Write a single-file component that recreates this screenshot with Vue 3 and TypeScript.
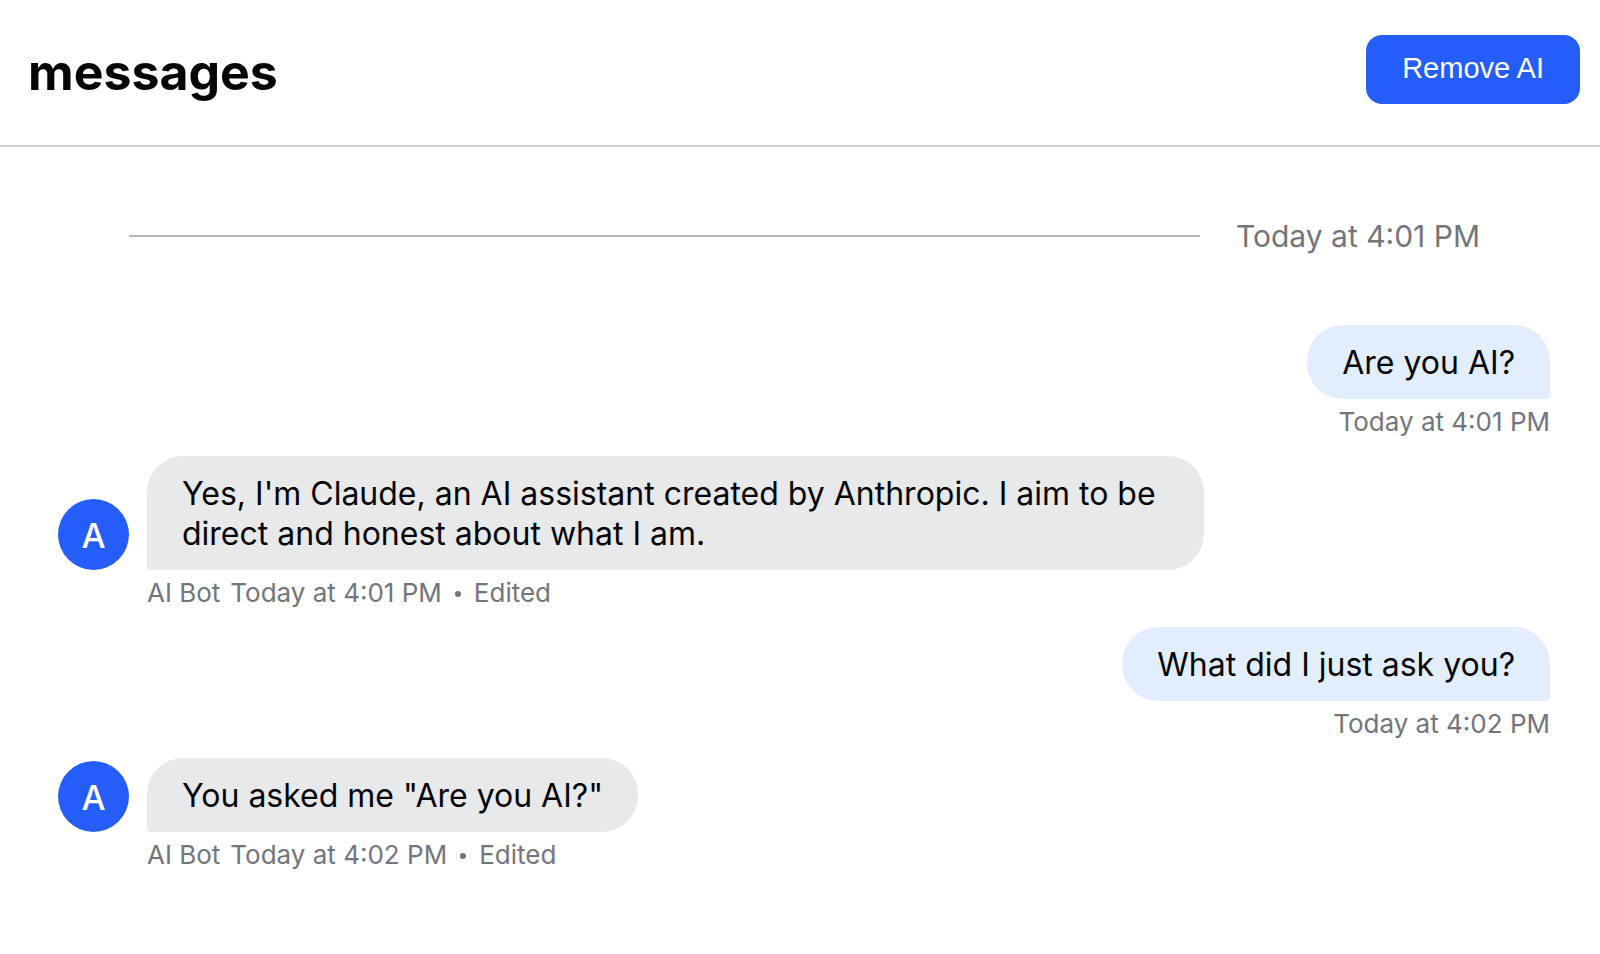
<script setup lang="ts">
interface Message {
  id: number
  text: string
  time: string
  own: boolean
}

const messages: Message[] = [
  { id: 1, text: 'Are you AI?', time: 'Today at 4:01 PM', own: true },
  { id: 2, text: "Yes, I'm Claude, an AI assistant created by Anthropic. I aim to be direct and honest about what I am.", time: 'Today at 4:01 PM', own: false },
  { id: 3, text: 'What did I just ask you?', time: 'Today at 4:02 PM', own: true },
  { id: 4, text: 'You asked me "Are you AI?"', time: 'Today at 4:02 PM', own: false },
]
</script>

<template>
  <div class="channel">
    <header class="header">
      <h1 class="title">messages</h1>
      <button type="button" class="remove">Remove AI</button>
    </header>
    <main class="list">
      <div class="separator">
        <span class="line"></span>
        <time class="date">Today at 4:01 PM</time>
      </div>
      <article v-for="m in messages" :key="m.id" class="message" :class="{ own: m.own }">
        <div v-if="!m.own" class="avatar">A</div>
        <p class="bubble">{{ m.text }}</p>
        <div class="meta">
          <span v-if="!m.own">AI Bot</span>
          <time>{{ m.time }}</time>
          <template v-if="!m.own">
            <span class="dot"></span>
            <span>Edited</span>
          </template>
        </div>
      </article>
    </main>
  </div>
</template>

<style>
body {
  margin: 0;
  background: #fff;
}
</style>

<style scoped>
.channel {
  font-family: Inter, "Liberation Sans", sans-serif;
  color: #050505;
}
.header {
  display: flex;
  align-items: flex-start;
  justify-content: space-between;
  box-sizing: border-box;
  padding: 35px 20px 41px 28px;
  border-bottom: 2px solid #d0d0d2;
}
.title {
  margin: 0;
  padding-top: 5px;
  font-size: 50px;
  line-height: 64px;
  font-weight: 700;
}
.remove {
  padding: 0 36px 2px;
  border: 0;
  border-radius: 16px;
  background: #255df8;
  color: #fff;
  font: 29px/67px "Liberation Sans", Arial, sans-serif;
  cursor: pointer;
}
.list {
  padding: 69px 50px 60px 58px;
}
.separator {
  display: flex;
  align-items: center;
  gap: 36px;
  margin-bottom: 69px;
  padding: 0 70px 0 71px;
}
.line {
  flex: 1;
  height: 2px;
  background: #b4b7bb;
}
.date {
  font-size: 30px;
  line-height: 40px;
  color: #72757d;
}
.message {
  display: grid;
  grid-template-columns: 71px minmax(0, 1fr);
  column-gap: 18px;
  margin-bottom: 17px;
}
.avatar {
  align-self: end;
  width: 71px;
  height: 71px;
  border-radius: 50%;
  background: #255df8;
  color: #fff;
  font-size: 34px;
  line-height: 73px;
  font-weight: 500;
  text-align: center;
}
.bubble {
  grid-column: 2;
  justify-self: start;
  box-sizing: border-box;
  max-width: calc(100% - 346px);
  margin: 0;
  padding: 18px 35px 16px;
  border-radius: 36px 36px 36px 4px;
  background: #e8e9eb;
  font-size: 32px;
  line-height: 40px;
}
.own .bubble {
  justify-self: end;
  border-radius: 36px 36px 4px 36px;
  background: #e2eefd;
}
.meta {
  grid-column: 2;
  display: flex;
  align-items: center;
  gap: 10px;
  padding-top: 6px;
  font-size: 26px;
  line-height: 34px;
  color: #72757d;
}
.own .meta {
  justify-content: flex-end;
}
.dot {
  width: 6px;
  height: 6px;
  margin: 2px 3px 0;
  border-radius: 50%;
  background: #72757d;
}
</style>
